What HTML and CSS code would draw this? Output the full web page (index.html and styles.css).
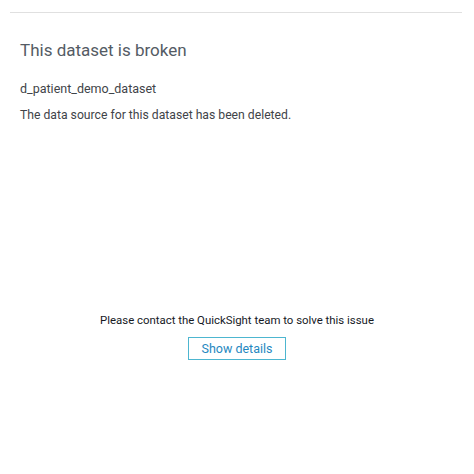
FILE: index.html
```html
<!DOCTYPE html>
<html>
<head>
<meta charset="utf-8">
<link rel="stylesheet" href="styles.css">
</head>
<body>
<div class="page">
  <div class="divider"></div>
  <div class="content">
    <h1 class="title">This dataset is broken</h1>
    <p class="name">d_patient_demo_dataset</p>
    <p class="desc">The data source for this dataset has been deleted.</p>
  </div>
  <div class="footer">
    <p class="contact">Please contact the QuickSight team to solve this issue</p>
    <button class="btn">Show details</button>
  </div>
</div>
</body>
</html>
```
FILE: styles.css
```css
html, body {
  margin: 0;
  padding: 0;
  background: #ffffff;
}
body {
  font-family: Roboto, Lato, sans-serif;
  color: #444;
}
.page {
  width: 474px;
  height: 474px;
  display: flex;
  flex-direction: column;
}
.divider {
  margin: 12px 12px 0 10px;
  height: 1px;
  background: #e0e0e0;
}
.content {
  padding: 25px 20px 0 20px;
}
.title {
  margin: 0;
  font-size: 17px;
  font-weight: 400;
  line-height: 24px;
  color: #545b64;
}
.name {
  margin: 18px 0 0 0;
  font-size: 12.5px;
  line-height: 18px;
  color: #3f4449;
}
.desc {
  margin: 8px 0 0 0;
  font-size: 12.2px;
  line-height: 18px;
  color: #3f4449;
}
.footer {
  margin-top: 187px;
  display: flex;
  flex-direction: column;
  align-items: center;
}
.contact {
  margin: 0;
  font-size: 11.4px;
  line-height: 18px;
  color: #16191f;
}
.btn {
  margin-top: 8px;
  width: 98px;
  height: 23px;
  border: 1px solid #4db6d0;
  background: #fff;
  color: #1f88c0;
  font-family: inherit;
  font-size: 12.5px;
  padding: 0;
}
```
